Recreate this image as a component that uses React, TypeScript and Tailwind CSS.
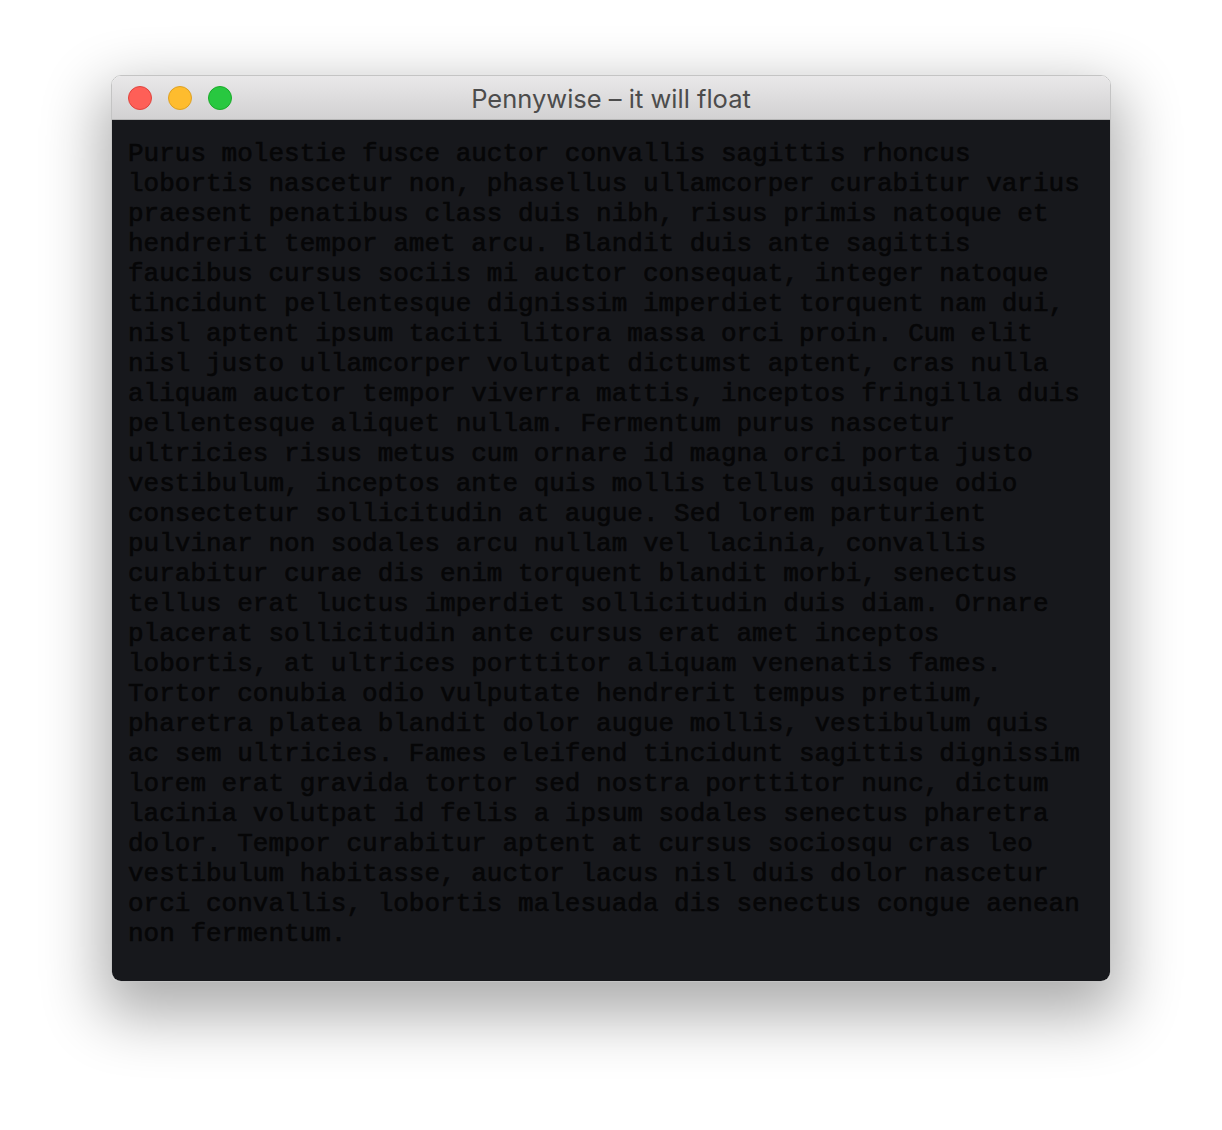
const lines = [
  "Purus molestie fusce auctor convallis sagittis rhoncus",
  "lobortis nascetur non, phasellus ullamcorper curabitur varius",
  "praesent penatibus class duis nibh, risus primis natoque et",
  "hendrerit tempor amet arcu. Blandit duis ante sagittis",
  "faucibus cursus sociis mi auctor consequat, integer natoque",
  "tincidunt pellentesque dignissim imperdiet torquent nam dui,",
  "nisl aptent ipsum taciti litora massa orci proin. Cum elit",
  "nisl justo ullamcorper volutpat dictumst aptent, cras nulla",
  "aliquam auctor tempor viverra mattis, inceptos fringilla duis",
  "pellentesque aliquet nullam. Fermentum purus nascetur",
  "ultricies risus metus cum ornare id magna orci porta justo",
  "vestibulum, inceptos ante quis mollis tellus quisque odio",
  "consectetur sollicitudin at augue. Sed lorem parturient",
  "pulvinar non sodales arcu nullam vel lacinia, convallis",
  "curabitur curae dis enim torquent blandit morbi, senectus",
  "tellus erat luctus imperdiet sollicitudin duis diam. Ornare",
  "placerat sollicitudin ante cursus erat amet inceptos",
  "lobortis, at ultrices porttitor aliquam venenatis fames.",
  "Tortor conubia odio vulputate hendrerit tempus pretium,",
  "pharetra platea blandit dolor augue mollis, vestibulum quis",
  "ac sem ultricies. Fames eleifend tincidunt sagittis dignissim",
  "lorem erat gravida tortor sed nostra porttitor nunc, dictum",
  "lacinia volutpat id felis a ipsum sodales senectus pharetra",
  "dolor. Tempor curabitur aptent at cursus sociosqu cras leo",
  "vestibulum habitasse, auctor lacus nisl duis dolor nascetur",
  "orci convallis, lobortis malesuada dis senectus congue aenean",
  "non fermentum.",
];

const App = () => {
  return (
    <div className="min-h-[1130px] w-full bg-white flex justify-center pt-[75px]">
      <div className="w-[1000px] h-[907px] flex flex-col rounded-[10px] overflow-hidden border border-[#c4c4c4] shadow-[0_24px_60px_10px_rgba(0,0,0,0.32)]">
        {/* title bar */}
        <div className="relative h-[44px] shrink-0 flex items-center justify-center bg-gradient-to-b from-[#e9e8e9] to-[#d2d1d2] border-b border-[#b5b5b5]">
          <div className="absolute left-[16px] top-[10px] flex gap-[16px]">
            <span className="w-[24px] h-[24px] rounded-full bg-[#fe5f57] border border-[#e0443e]" />
            <span className="w-[24px] h-[24px] rounded-full bg-[#febc2e] border border-[#dea123]" />
            <span className="w-[24px] h-[24px] rounded-full bg-[#28c840] border border-[#1aab29]" />
          </div>
          <span
            className="text-[25.5px] text-[#4c4c4c] leading-none pt-[2px]"
            style={{ fontFamily: '"Helvetica Neue", Inter, "Liberation Sans", sans-serif' }}
          >
            Pennywise – it will float
          </span>
        </div>
        {/* content */}
        <div
          className="flex-1 bg-[#17181c] px-[16px] pt-[19px] text-[26px] leading-[30px] text-[#060607] whitespace-pre [-webkit-text-stroke:0.6px_#060607]"
          style={{ fontFamily: '"Liberation Mono", "Courier New", monospace' }}
        >
          {lines.map((l, i) => (
            <div key={i}>{l}</div>
          ))}
        </div>
      </div>
    </div>
  );
};

export default App;
